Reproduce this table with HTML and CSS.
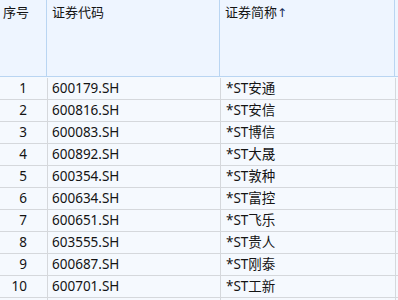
FILE: index.html
```html
<!DOCTYPE html>
<html>
<head>
<meta charset="utf-8">
<link rel="stylesheet" href="styles.css">
</head>
<body>
<div class="grid">
  <div class="head">
    <div class="hc c1">序号</div>
    <div class="hc c2">证券代码</div>
    <div class="hc c3">证券简称<span class="arrow">↑</span></div>
    <div class="hc c4"></div>
  </div>
  <div class="body">
    <div class="row"><div class="bc c1 num">1</div><div class="bc c2">600179.SH</div><div class="bc c3">*ST安通</div><div class="bc c4"></div></div>
    <div class="row"><div class="bc c1 num">2</div><div class="bc c2">600816.SH</div><div class="bc c3">*ST安信</div><div class="bc c4"></div></div>
    <div class="row"><div class="bc c1 num">3</div><div class="bc c2">600083.SH</div><div class="bc c3">*ST博信</div><div class="bc c4"></div></div>
    <div class="row"><div class="bc c1 num">4</div><div class="bc c2">600892.SH</div><div class="bc c3">*ST大晟</div><div class="bc c4"></div></div>
    <div class="row"><div class="bc c1 num">5</div><div class="bc c2">600354.SH</div><div class="bc c3">*ST敦种</div><div class="bc c4"></div></div>
    <div class="row"><div class="bc c1 num">6</div><div class="bc c2">600634.SH</div><div class="bc c3">*ST富控</div><div class="bc c4"></div></div>
    <div class="row"><div class="bc c1 num">7</div><div class="bc c2">600651.SH</div><div class="bc c3">*ST飞乐</div><div class="bc c4"></div></div>
    <div class="row"><div class="bc c1 num">8</div><div class="bc c2">603555.SH</div><div class="bc c3">*ST贵人</div><div class="bc c4"></div></div>
    <div class="row"><div class="bc c1 num">9</div><div class="bc c2">600687.SH</div><div class="bc c3">*ST刚泰</div><div class="bc c4"></div></div>
    <div class="row"><div class="bc c1 num">10</div><div class="bc c2">600701.SH</div><div class="bc c3">*ST工新</div><div class="bc c4"></div></div>
    <div class="row"><div class="bc c1 num"></div><div class="bc c2"></div><div class="bc c3"></div><div class="bc c4"></div></div>
  </div>
</div>
</body>
</html>
```
FILE: styles.css
```css
html, body {
  margin: 0;
  padding: 0;
  background: #f5f9fe;
}
.grid {
  width: 398px;
  height: 300px;
  overflow: hidden;
  font-family: "Noto Sans", "Noto Sans CJK SC", sans-serif;
  font-size: 13px;
  color: #141414;
}
.head {
  display: flex;
  height: 77px;
  background: #eef5ff;
  border-bottom: 1px solid #b9d5f2;
  box-sizing: border-box;
}
.hc {
  flex: none;
  box-sizing: border-box;
  border-right: 1px solid #b9d5f2;
  padding: 2px 0 0 5px;
  line-height: 20px;
  white-space: nowrap;
}
.head .c1 { width: 47px; padding-left: 3px; }
.head .c2 { width: 173px; }
.head .c3 { width: 175px; }
.head .c4 { width: 40px; }
.arrow {
  color: #1b2f5a;
  font-family: "DejaVu Sans", sans-serif;
  font-size: 12px;
}
.body {
  padding-top: 1px;
  font-size: 13.5px;
}
.row {
  display: flex;
  height: 22px;
  box-sizing: border-box;
  border-bottom: 1px solid #d5d8dc;
}
.bc {
  flex: none;
  box-sizing: border-box;
  border-right: 1px solid #d5d8dc;
  line-height: 21px;
  padding-left: 4px;
  white-space: nowrap;
}
.body .c1 { width: 48px; padding-left: 0; padding-right: 20px; text-align: right; }
.body .c2 { width: 173px; }
.body .c3 { width: 175px; padding-left: 5px; }
.body .c4 { width: 40px; }
```
